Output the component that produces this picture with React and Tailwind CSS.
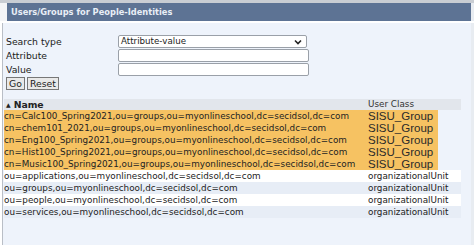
import React from "react";

const groups = [
  "cn=Calc100_Spring2021,ou=groups,ou=myonlineschool,dc=secidsol,dc=com",
  "cn=chem101_2021,ou=groups,ou=myonlineschool,dc=secidsol,dc=com",
  "cn=Eng100_Spring2021,ou=groups,ou=myonlineschool,dc=secidsol,dc=com",
  "cn=Hist100_Spring2021,ou=groups,ou=myonlineschool,dc=secidsol,dc=com",
  "cn=Music100_Spring2021,ou=groups,ou=myonlineschool,dc=secidsol,dc=com",
];
const ous = [
  "ou=applications,ou=myonlineschool,dc=secidsol,dc=com",
  "ou=groups,ou=myonlineschool,dc=secidsol,dc=com",
  "ou=people,ou=myonlineschool,dc=secidsol,dc=com",
  "ou=services,ou=myonlineschool,dc=secidsol,dc=com",
];

export default function App() {
  return (
    <div
      className="w-[474px] h-[245px] bg-white overflow-hidden text-[#222]"
      style={{ fontFamily: "'DejaVu Sans', Verdana, sans-serif" }}
    >
      <div className="h-[3px] bg-[#c9cdd3]" />
      <div className="flex h-[18px]">
        <div className="w-[7px] bg-[#f3f4f6]" />
        <div
          className="flex-1 bg-[#5d7394] text-[#e9eef6] font-bold text-[9.2px] leading-[18px] pl-[4px]"
          style={{ fontFamily: "'DejaVu Sans Condensed', 'DejaVu Sans', sans-serif" }}
        >
          Users/Groups for People-Identities
        </div>
        <div className="w-[3px] bg-[#e8ecf1]" />
      </div>
      <div className="h-[2px] bg-white" />
      <div className="flex h-[222px]">
        <div className="w-[2px] bg-white" />
        <div className="w-[1px] bg-[#b9bec6]" />
        <div className="flex-1 bg-[#eef3fb] pt-[12px] pl-[1px]">
          <div className="flex flex-col gap-[1px] text-[9.3px]">
            <div className="flex items-center h-[13px]">
              <div className="w-[114px] pl-[2px]">Search type</div>
              <div className="w-[189px] h-[13px] bg-white border border-[#9aa0a8] rounded-[2px] flex items-center justify-between pl-[2px] pr-[4px]">
                <span className="text-[8.7px]">Attribute-value</span>
                <svg width="8" height="6" viewBox="0 0 8 6">
                  <path d="M1 1.5 L4 4.5 L7 1.5" stroke="#222" strokeWidth="1.6" fill="none" />
                </svg>
              </div>
            </div>
            <div className="flex items-center h-[13px]">
              <div className="w-[114px] pl-[2px]">Attribute</div>
              <div className="w-[191px] h-[13px] bg-white border border-[#9aa0a8] rounded-[2px]" />
            </div>
            <div className="flex items-center h-[13px]">
              <div className="w-[114px] pl-[2px]">Value</div>
              <div className="w-[191px] h-[13px] bg-white border border-[#9aa0a8] rounded-[2px]" />
            </div>
            <div className="flex gap-[2px] h-[13px] pl-[2px]">
              <div className="h-[13px] px-[2px] bg-[#e9e9e9] border border-[#777] leading-[11px]">Go</div>
              <div className="h-[13px] px-[2px] bg-[#e9e9e9] border border-[#777] leading-[11px]">Reset</div>
            </div>
          </div>
          <div className="mt-[9px] w-[457px] text-[8.8px]">
            <div className="flex h-[11px] leading-[11px] bg-[#e2e6ec]">
              <div className="w-[364px] pl-[2px] font-bold flex items-center text-[9.3px]">
                <span className="text-[6px] mr-[3px]">▲</span>Name
              </div>
              <div className="text-[#333]">User Class</div>
            </div>
            {groups.map((g) => (
              <div key={g} className="flex h-[12px] leading-[12px] bg-[#f6c262] w-[434px]">
                <div className="w-[364px] whitespace-nowrap overflow-hidden">{g}</div>
                <div
                  className="text-[11.5px] text-[#2a2a2a]"
                  style={{ fontFamily: "'Liberation Sans', Arial, sans-serif" }}
                >
                  SISU_Group
                </div>
              </div>
            ))}
            {ous.map((o, i) => (
              <div
                key={o}
                className={`flex h-[12px] leading-[12px] ${i % 2 === 0 ? "bg-white" : "bg-[#e7edf6]"}`}
              >
                <div className="w-[364px] whitespace-nowrap">{o}</div>
                <div>organizationalUnit</div>
              </div>
            ))}
          </div>
        </div>
        <div className="w-[3px] bg-[#e8ecf1]" />
      </div>
    </div>
  );
}
